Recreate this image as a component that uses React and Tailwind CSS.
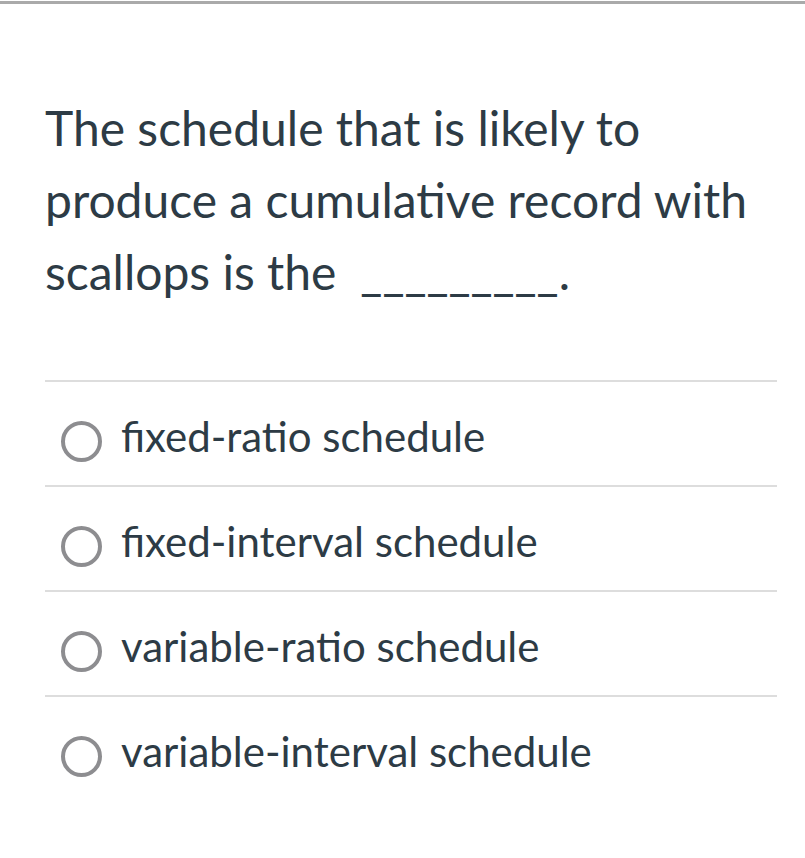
import React from 'react';

const answers = [
  'fixed-ratio schedule',
  'fixed-interval schedule',
  'variable-ratio schedule',
  'variable-interval schedule',
];

export default function App() {
  return (
    <div className="min-h-[858px] w-[805px] bg-white pt-px font-['Lato',sans-serif] text-[#2d3b45]">
      <div className="h-[3px] bg-[#aaaaaa]" />
      <div className="pl-[45px] pr-[28px]">
        <p className="mt-[88px] text-[48px] leading-[72px]">
          The schedule that is likely to produce a cumulative record with scallops is the
          <span className="ml-[24px]">_________.</span>
        </p>
        <div className="mt-[72px]">
          {answers.map((a) => (
            <label key={a} className="flex h-[105px] items-center border-t-2 border-[#dddddd] pt-[15px] pl-[16px]">
              <span className="h-[41px] w-[41px] shrink-0 rounded-full border-4 border-[#8d8d90]" />
              <span className="mb-[10px] ml-[19px] text-[42px] leading-none">{a}</span>
            </label>
          ))}
        </div>
      </div>
    </div>
  );
}
